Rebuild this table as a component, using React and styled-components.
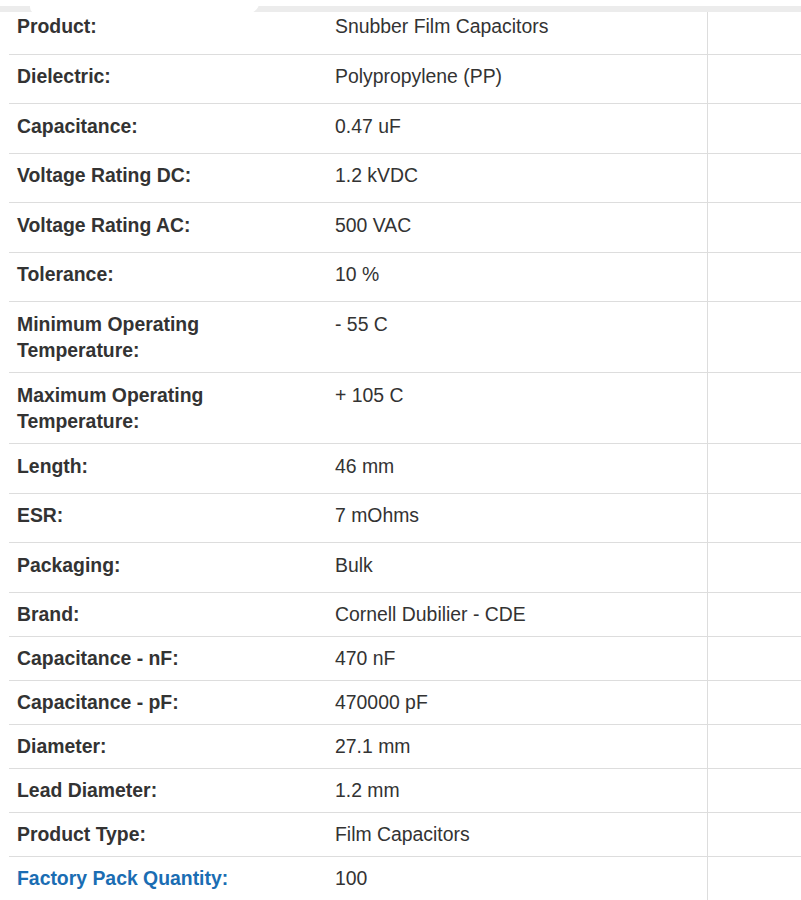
import React from 'react';
import styled, { createGlobalStyle } from 'styled-components';

const GlobalStyle = createGlobalStyle`
  body {
    margin: 0;
    background: #fff;
    font-family: "Liberation Sans", Arial, sans-serif;
  }
`;

const Page = styled.div`
  position: relative;
  padding-top: 4.5px;
  width: 801px;
  overflow: hidden;
`;

// the top of the capture is partly washed out: a grey band with white smudges
const TopFade = styled.div`
  position: absolute;
  top: 0;
  left: 0;
  right: 0;
  height: 12px;
  background: linear-gradient(to bottom, #fff 0, #fff 6px, #ececec 6px, #ececec 12px);

  &::before {
    content: '';
    position: absolute;
    left: 30px;
    top: 0;
    width: 230px;
    height: 14px;
    background: #fff;
    border-radius: 0 0 60px 30px;
  }
`;

const Table = styled.table`
  margin-left: 9px;
  width: 800px;
  table-layout: fixed;
  border-collapse: collapse;
  font-size: 19.4px;
  line-height: 26.5px;
  color: #333;
`;

const Row = styled.tr`
  height: ${p => p.$height};
  border-bottom: 1px solid #dddddd;
`;

const Cell = styled.td`
  vertical-align: top;
  padding: 8.5px 8px 6px;
`;

const Label = styled(Cell)`
  width: 302px;
  font-weight: bold;
  color: ${p => (p.$link ? '#1a6db3' : '#333')};
`;

const Value = styled(Cell)`
  width: 364px;
`;

const Spare = styled(Cell)`
  border-left: 1px solid #dddddd;
`;

const TALL = '49.5px';
const WRAP = '71px';
const SHORT = '44px';

const specs = [
  ['Product:', 'Snubber Film Capacitors', TALL],
  ['Dielectric:', 'Polypropylene (PP)', TALL],
  ['Capacitance:', '0.47 uF', TALL],
  ['Voltage Rating DC:', '1.2 kVDC', TALL],
  ['Voltage Rating AC:', '500 VAC', TALL],
  ['Tolerance:', '10 %', TALL],
  ['Minimum Operating Temperature:', '- 55 C', WRAP],
  ['Maximum Operating Temperature:', '+ 105 C', WRAP],
  ['Length:', '46 mm', TALL],
  ['ESR:', '7 mOhms', TALL],
  ['Packaging:', 'Bulk', TALL],
  ['Brand:', 'Cornell Dubilier - CDE', SHORT],
  ['Capacitance - nF:', '470 nF', SHORT],
  ['Capacitance - pF:', '470000 pF', SHORT],
  ['Diameter:', '27.1 mm', SHORT],
  ['Lead Diameter:', '1.2 mm', SHORT],
  ['Product Type:', 'Film Capacitors', SHORT],
  ['Factory Pack Quantity:', '100', SHORT, true]
];

const App = () => {
  return (
    <Page>
      <GlobalStyle />
      <Table>
        <tbody>
          {specs.map(([label, value, height, link]) =>
            <Row key={label} $height={height}>
              <Label $link={link}>{label}</Label>
              <Value>{value}</Value>
              <Spare />
            </Row>
          )}
        </tbody>
      </Table>
      <TopFade />
    </Page>
  );
};

export default App;
